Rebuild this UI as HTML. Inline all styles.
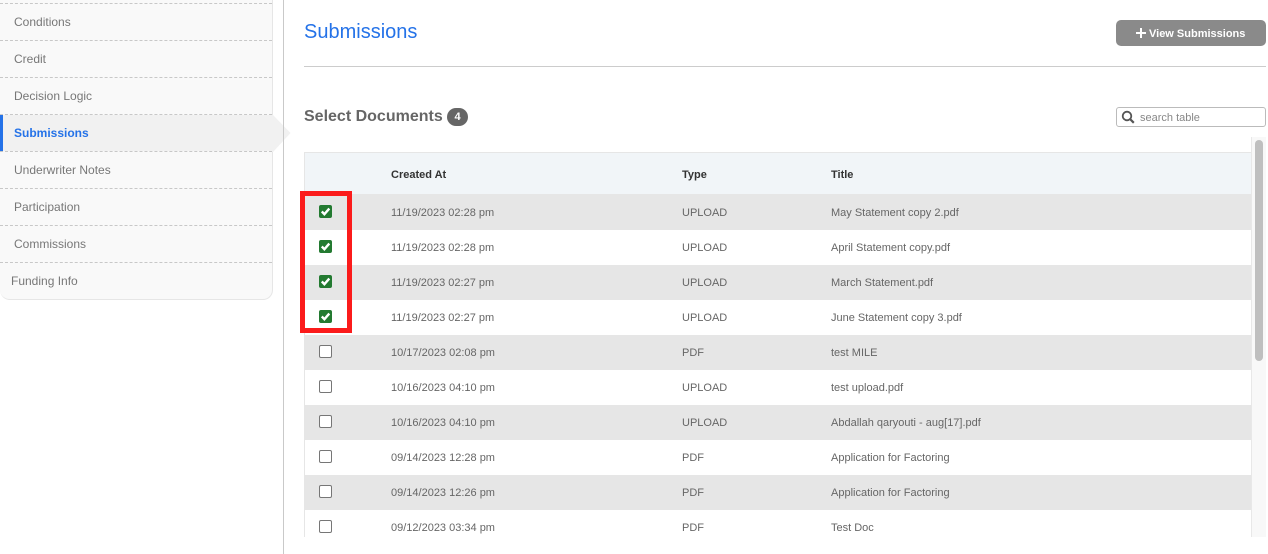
<!DOCTYPE html>
<html lang="en">
<head>
<meta charset="utf-8">
<title>Submissions</title>
<style>
html,body{margin:0;padding:0;background:#fff}
body{width:1268px;height:554px;position:relative;overflow:hidden;font-family:"Liberation Sans",Arial,sans-serif}
.a{position:absolute}
#side{left:0;top:-20px;width:272px;height:319px;background:#f9f9f9;border-right:1px solid #e6e6e6;border-bottom:1px solid #e6e6e6;border-bottom-right-radius:10px;border-bottom-left-radius:10px}
.dash{position:absolute;left:0;width:272px;height:0;border-top:1px dashed #c8c8c8}
.nav{position:absolute;left:14px;font-size:12px;line-height:14px;color:#777;white-space:nowrap}
.row{position:absolute;left:305px;width:946px;height:35px}
.g{background:#e6e6e6}
.t{position:absolute;font-size:11px;line-height:13px;color:#666;white-space:nowrap;margin-top:1px}
.h{position:absolute;font-size:11px;line-height:13px;color:#333;font-weight:bold;white-space:nowrap;margin-top:1px}
.cb{position:absolute;left:319px;width:11px;height:11px;border:1px solid #767676;border-radius:2px;background:#fff}
.cb.on{background:#237a31;border-color:#237a31}
.cb svg{position:absolute;left:0;top:0}
</style>
</head>
<body>
<div class="a" id="side"></div>
<div class="a" style="left:0;top:115px;width:273px;height:36px;background:#f1f1f1"></div>
<svg class="a" style="left:272px;top:115px" width="19" height="37"><path d="M0 0L1 0L18.500 18L1 37L0 37Z" fill="#f1f1f1"/></svg>
<div class="a" style="left:0;top:115px;width:3px;height:37px;background:#2472e8"></div>
<div class="a" style="left:283px;top:0;width:1px;height:554px;background:#c9c9c9"></div>
<div class="dash" style="top:3px"></div>
<div class="dash" style="top:40px"></div>
<div class="dash" style="top:77px"></div>
<div class="dash" style="top:114px"></div>
<div class="dash" style="top:151px"></div>
<div class="dash" style="top:188px"></div>
<div class="dash" style="top:225px"></div>
<div class="dash" style="top:262px"></div>
<div class="nav" style="top:15px">Conditions</div>
<div class="nav" style="top:52px">Credit</div>
<div class="nav" style="top:89px">Decision Logic</div>
<div class="nav" style="top:126px;color:#2472e8;font-weight:bold">Submissions</div>
<div class="nav" style="top:163px">Underwriter Notes</div>
<div class="nav" style="top:200px">Participation</div>
<div class="nav" style="top:237px">Commissions</div>
<div class="nav" style="top:274px;left:11px">Funding Info</div>

<div class="a" style="left:304px;top:20px;font-size:20px;line-height:24px;color:#2472e8;white-space:nowrap">Submissions</div>
<div class="a" style="left:1116px;top:20px;width:150px;height:26px;background:#8a8a8a;border-radius:5px"></div>
<svg class="a" style="left:1136px;top:28px" width="10" height="10"><path d="M5 0V10M0 5H10" stroke="#fff" stroke-width="2"/></svg>
<div class="a" style="left:1149px;top:27px;font-size:11px;line-height:14px;font-weight:bold;color:#fff;white-space:nowrap">View Submissions</div>
<div class="a" style="left:304px;top:66px;width:962px;height:1px;background:#cccccc"></div>

<div class="a" style="left:304px;top:107px;font-size:16px;line-height:19px;font-weight:bold;color:#666;white-space:nowrap">Select Documents</div>
<div class="a" style="left:447px;top:108px;width:21px;height:18px;border-radius:9px;background:#666;color:#fff;font-size:11px;line-height:18px;font-weight:bold;text-align:center">4</div>
<div class="a" style="left:1116px;top:107px;width:148px;height:18px;border:1px solid #bbb;border-radius:3px;background:#fff"></div>
<svg class="a" style="left:1121px;top:110px" width="14" height="14"><circle cx="6" cy="6" r="4.300" fill="none" stroke="#555" stroke-width="1.800"/><path d="M9 9L12.800 12.800" stroke="#555" stroke-width="2.200"/></svg>
<div class="a" style="left:1140px;top:112px;font-size:11px;line-height:13px;color:#888;white-space:nowrap">search table</div>

<div class="a" style="left:304px;top:152px;width:947px;height:1px;background:#e6e6e6"></div>
<div class="a" style="left:304px;top:152px;width:1px;height:385px;background:#e6e6e6"></div>
<div class="a" style="left:305px;top:153px;width:946px;height:41px;background:#f1f5f8"></div>
<div class="row g" style="top:194px;height:36px"></div>
<div class="row g" style="top:265px"></div>
<div class="row g" style="top:335px"></div>
<div class="row g" style="top:405px"></div>
<div class="row g" style="top:475px"></div>

<div class="a" style="left:1251px;top:137px;width:15px;height:400px;background:#f8f8f8;border-left:1px solid #e8e8e8;box-sizing:border-box"></div>
<div class="a" style="left:1255px;top:140px;width:8px;height:221px;background:#bfbfbf;border-radius:4px"></div>

<div class="h" style="left:391px;top:168px">Created At</div>
<div class="h" style="left:682px;top:168px">Type</div>
<div class="h" style="left:831px;top:168px">Title</div>

<div class="cb on" style="top:205px"><svg width="11" height="11"><path d="M1.800 5.500L4.400 8.200L9.300 2.600" fill="none" stroke="#fff" stroke-width="2.400"/></svg></div>
<div class="t" style="left:391px;top:206px">11/19/2023 02:28 pm</div><div class="t" style="left:682px;top:206px">UPLOAD</div><div class="t" style="left:831px;top:206px">May Statement copy 2.pdf</div>

<div class="cb on" style="top:240px"><svg width="11" height="11"><path d="M1.800 5.500L4.400 8.200L9.300 2.600" fill="none" stroke="#fff" stroke-width="2.400"/></svg></div>
<div class="t" style="left:391px;top:241px">11/19/2023 02:28 pm</div><div class="t" style="left:682px;top:241px">UPLOAD</div><div class="t" style="left:831px;top:241px">April Statement copy.pdf</div>

<div class="cb on" style="top:275px"><svg width="11" height="11"><path d="M1.800 5.500L4.400 8.200L9.300 2.600" fill="none" stroke="#fff" stroke-width="2.400"/></svg></div>
<div class="t" style="left:391px;top:276px">11/19/2023 02:27 pm</div><div class="t" style="left:682px;top:276px">UPLOAD</div><div class="t" style="left:831px;top:276px">March Statement.pdf</div>

<div class="cb on" style="top:310px"><svg width="11" height="11"><path d="M1.800 5.500L4.400 8.200L9.300 2.600" fill="none" stroke="#fff" stroke-width="2.400"/></svg></div>
<div class="t" style="left:391px;top:311px">11/19/2023 02:27 pm</div><div class="t" style="left:682px;top:311px">UPLOAD</div><div class="t" style="left:831px;top:311px">June Statement copy 3.pdf</div>

<div class="cb" style="top:345px"></div>
<div class="t" style="left:391px;top:346px">10/17/2023 02:08 pm</div><div class="t" style="left:682px;top:346px">PDF</div><div class="t" style="left:831px;top:346px">test MILE</div>

<div class="cb" style="top:380px"></div>
<div class="t" style="left:391px;top:381px">10/16/2023 04:10 pm</div><div class="t" style="left:682px;top:381px">UPLOAD</div><div class="t" style="left:831px;top:381px">test upload.pdf</div>

<div class="cb" style="top:415px"></div>
<div class="t" style="left:391px;top:416px">10/16/2023 04:10 pm</div><div class="t" style="left:682px;top:416px">UPLOAD</div><div class="t" style="left:831px;top:416px">Abdallah qaryouti - aug[17].pdf</div>

<div class="cb" style="top:450px"></div>
<div class="t" style="left:391px;top:451px">09/14/2023 12:28 pm</div><div class="t" style="left:682px;top:451px">PDF</div><div class="t" style="left:831px;top:451px">Application for Factoring</div>

<div class="cb" style="top:485px"></div>
<div class="t" style="left:391px;top:486px">09/14/2023 12:26 pm</div><div class="t" style="left:682px;top:486px">PDF</div><div class="t" style="left:831px;top:486px">Application for Factoring</div>

<div class="cb" style="top:520px"></div>
<div class="t" style="left:391px;top:521px">09/12/2023 03:34 pm</div><div class="t" style="left:682px;top:521px">PDF</div><div class="t" style="left:831px;top:521px">Test Doc</div>

<div class="a" style="left:300px;top:191px;width:42px;height:132px;border:5px solid #fb1b1b"></div>
</body>
</html>
